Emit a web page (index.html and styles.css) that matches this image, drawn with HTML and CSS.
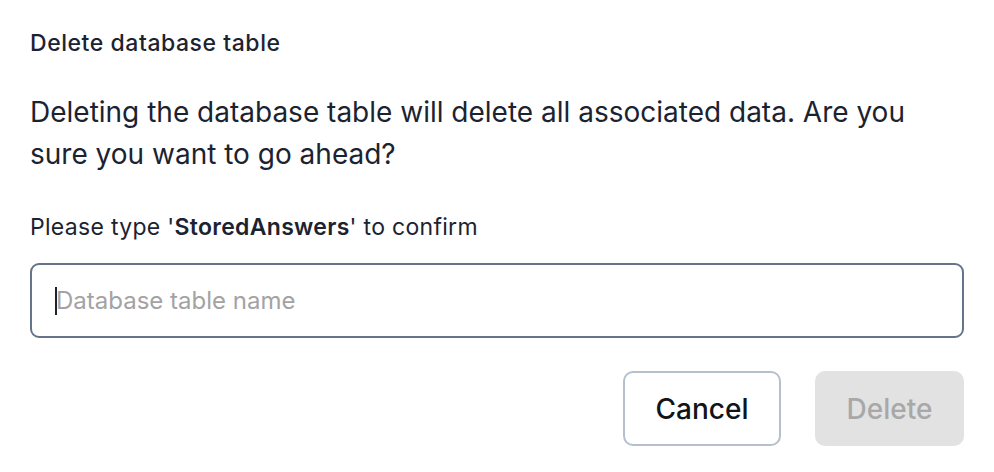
FILE: index.html
```html
<!DOCTYPE html>
<html>
<head>
<meta charset="utf-8">
<link rel="stylesheet" href="styles.css">
</head>
<body>
<div class="dialog">
  <h2 class="title">Delete database table</h2>
  <p class="message">Deleting the database table will delete all associated data. Are you sure you want to go ahead?</p>
  <label class="label" for="name">Please type '<strong>StoredAnswers</strong>' to confirm</label>
  <div class="field"><span class="caret"></span><span class="placeholder">Database table name</span></div>
  <div class="actions">
    <button class="btn btn-cancel">Cancel</button>
    <button class="btn btn-delete" disabled>Delete</button>
  </div>
</div>
</body>
</html>
```
FILE: styles.css
```css
* { box-sizing: border-box; }
html, body { margin: 0; padding: 0; background: #fff; }
body { font-family: Inter, "Noto Sans", sans-serif; color: #1c2330; }
.dialog { padding: 30px 30px 0 30px; width: 994px; }
.title { margin: 0; font-size: 23px; font-weight: 500; line-height: 26px; letter-spacing: 0.55px; }
.message { margin: 35px 0 0 0; font-size: 28px; font-weight: 400; line-height: 42px; max-width: 900px; }
.label { display: block; margin-top: 38px; font-size: 23px; line-height: 28px; letter-spacing: 0.3px; }
.label strong { font-weight: 600; }
.field { margin-top: 22px; height: 75px; border: 2px solid #66748a; border-radius: 9px; display: flex; align-items: center; padding-left: 23px; }
.caret { width: 2px; height: 28px; background: #1c2330; }
.placeholder { font-size: 24px; color: #a3a3a3; margin-left: -1px; }
.actions { display: flex; justify-content: flex-end; gap: 34px; margin-top: 33px; }
.btn { height: 75px; border-radius: 10px; font-family: Inter, "Noto Sans", sans-serif; font-size: 28px; font-weight: 500; }
.btn-cancel { width: 158px; background: #fff; border: 2px solid #b6c0cd; color: #111418; }
.btn-delete { width: 149px; background: #e2e2e2; border: none; color: #a8a8a8; }
```
